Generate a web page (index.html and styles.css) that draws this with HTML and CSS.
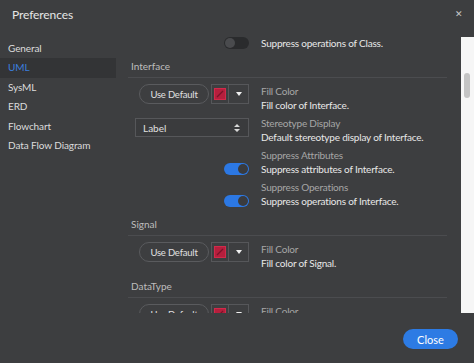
FILE: index.html
```html
<!DOCTYPE html>
<html lang="en">
  <head>
    <meta charset="UTF-8" />
    <title>Preferences</title>
    <link rel="stylesheet" href="styles.css">
  </head>
  <body>
    <div class="dialog">
      <div class="dialog-header">
        <span class="dialog-title">Preferences</span>
        <span class="dialog-close">&#x2715;</span>
      </div>

      <div class="dialog-body">
        <ul class="sidebar">
          <li>General</li>
          <li class="active">UML</li>
          <li>SysML</li>
          <li>ERD</li>
          <li>Flowchart</li>
          <li>Data Flow Diagram</li>
        </ul>

        <div class="content">
          <div class="content-inner">
            <div class="row">
              <div class="control"><span class="toggle"></span></div>
              <div class="info">
                <div class="label">Suppress Operations</div>
                <div class="desc">Suppress operations of Class.</div>
              </div>
            </div>

            <div class="group-title">Interface</div>
            <div class="row">
              <div class="control">
                <button class="btn-default">Use Default</button>
                <span class="swatch"><svg width="12" height="12" viewBox="0 0 12 12"><rect x="0.5" y="0.5" width="11" height="11" fill="#b51f3d" stroke="#d12a4a"/><path d="M3 9 L9 3" stroke="#7a1228" stroke-width="1.2"/></svg></span>
                <span class="drop"></span>
              </div>
              <div class="info">
                <div class="label">Fill Color</div>
                <div class="desc">Fill color of Interface.</div>
              </div>
            </div>
            <div class="row">
              <div class="control">
                <div class="select">
                  <span>Label</span>
                  <svg width="8" height="10" viewBox="0 0 8 10"><path d="M1 4 L4 1 L7 4 Z M1 6 L4 9 L7 6 Z" fill="#d8d8d8"/></svg>
                </div>
              </div>
              <div class="info">
                <div class="label">Stereotype Display</div>
                <div class="desc">Default stereotype display of Interface.</div>
              </div>
            </div>
            <div class="row">
              <div class="control"><span class="toggle on"></span></div>
              <div class="info">
                <div class="label">Suppress Attributes</div>
                <div class="desc">Suppress attributes of Interface.</div>
              </div>
            </div>
            <div class="row">
              <div class="control"><span class="toggle on"></span></div>
              <div class="info">
                <div class="label">Suppress Operations</div>
                <div class="desc">Suppress operations of Interface.</div>
              </div>
            </div>

            <div class="group-title">Signal</div>
            <div class="row">
              <div class="control">
                <button class="btn-default">Use Default</button>
                <span class="swatch"><svg width="12" height="12" viewBox="0 0 12 12"><rect x="0.5" y="0.5" width="11" height="11" fill="#b51f3d" stroke="#d12a4a"/><path d="M3 9 L9 3" stroke="#7a1228" stroke-width="1.2"/></svg></span>
                <span class="drop"></span>
              </div>
              <div class="info">
                <div class="label">Fill Color</div>
                <div class="desc">Fill color of Signal.</div>
              </div>
            </div>

            <div class="group-title">DataType</div>
            <div class="row">
              <div class="control">
                <button class="btn-default">Use Default</button>
                <span class="swatch"><svg width="12" height="12" viewBox="0 0 12 12"><rect x="0.5" y="0.5" width="11" height="11" fill="#b51f3d" stroke="#d12a4a"/><path d="M3 9 L9 3" stroke="#7a1228" stroke-width="1.2"/></svg></span>
                <span class="drop"></span>
              </div>
              <div class="info">
                <div class="label">Fill Color</div>
                <div class="desc">Fill color of DataType.</div>
              </div>
            </div>
          </div>
        </div>

        <div class="scrollbar"><div class="thumb"></div></div>
      </div>

      <div class="dialog-footer">
        <button class="btn-close">Close</button>
      </div>
    </div>
  </body>
</html>
```

FILE: styles.css
```css
body {
  margin: 0;
  font-family: Lato, "Noto Sans", sans-serif;
  background-color: #3d3e40;
}
.dialog {
  width: 474px;
  height: 363px;
  background: #3d3e40;
  color: #e2e2e2;
  display: flex;
  flex-direction: column;
  overflow: hidden;
}
.dialog-header {
  height: 37px;
  display: flex;
  justify-content: space-between;
  padding: 0 12px;
  box-sizing: border-box;
}
.dialog-title {
  font-size: 12px;
  letter-spacing: -0.1px;
  line-height: 30px;
  color: #e6e6e6;
}
.dialog-close {
  font-size: 9px;
  line-height: 27px;
  color: #c8c8c8;
  margin-right: -1px;
}
.dialog-body {
  height: 276px;
  display: flex;
}
.sidebar {
  list-style: none;
  margin: 0;
  padding: 2px 0 0 0;
  width: 117px;
  flex-shrink: 0;
}
.sidebar li {
  height: 19.4px;
  line-height: 19.4px;
  padding-left: 8px;
  font-size: 10px;
  letter-spacing: -0.1px;
  color: #dcdcdc;
}
.sidebar li.active {
  background: #333436;
  color: #3b7fde;
  margin-right: 1px;
}
.content {
  flex: 1;
  overflow: hidden;
}
.content-inner {
  margin-top: -15px;
  padding: 0 14px 0 11px;
}
.group-title {
  height: 23px;
  line-height: 24px;
  padding-left: 3px;
  font-size: 10px;
  color: #bdbdbd;
  border-bottom: 1px solid #4b4c4f;
}
.row {
  height: 32px;
  margin-top: 6px;
  display: flex;
  gap: 12px;
  padding-left: 7px;
}
.content-inner > .row:first-child {
  margin-top: 0;
}
.row + .row {
  margin-top: 0;
}
.control {
  width: 114px;
  flex-shrink: 0;
  display: flex;
  justify-content: flex-end;
  align-items: flex-start;
}
.info {
  padding-top: 1px;
  font-size: 10px;
  letter-spacing: -0.2px;
  line-height: 13.5px;
}
.label {
  color: #a6a6a6;
}
.desc {
  color: #e8e8e8;
}
.btn-default {
  height: 20px;
  width: 70px;
  margin-right: 2px;
  padding: 0;
  font-family: inherit;
  font-size: 9.5px;
  letter-spacing: -0.2px;
  color: #e0e0e0;
  background: #3d3e40;
  border: 1px solid #5a5b5e;
  border-radius: 10px;
}
.swatch {
  width: 18px;
  height: 20px;
  box-sizing: border-box;
  border: 1px solid #56575a;
  display: flex;
  align-items: center;
  justify-content: center;
}
.drop {
  width: 20px;
  height: 20px;
  box-sizing: border-box;
  border: 1px solid #56575a;
  border-left: none;
  display: flex;
  align-items: center;
  justify-content: center;
}
.drop::after {
  content: "";
  border-left: 3px solid transparent;
  border-right: 3px solid transparent;
  border-top: 4px solid #f0f0f0;
}
.select {
  margin-top: 2px;
  width: 114px;
  height: 19px;
  box-sizing: border-box;
  border: 1px solid #56575a;
  background: #3a3b3d;
  display: flex;
  align-items: center;
  justify-content: space-between;
  padding: 0 7px 0 7px;
  font-size: 10px;
  color: #e0e0e0;
}
.toggle {
  margin-top: 15px;
  width: 25px;
  height: 12px;
  border-radius: 6px;
  background: #2a2b2d;
  position: relative;
}
.toggle::after {
  content: "";
  position: absolute;
  top: 1px;
  left: 1px;
  width: 10px;
  height: 10px;
  border-radius: 50%;
  background: #4a4b4e;
}
.toggle.on {
  background: #2c78e4;
}
.toggle.on::after {
  left: 14px;
  background: #3a3b3e;
}
.scrollbar {
  width: 13px;
  flex-shrink: 0;
  background: #f6f6f6;
  padding: 36px 0 0 3px;
  box-sizing: border-box;
}
.thumb {
  width: 6px;
  height: 25px;
  border-radius: 3px;
  background: #c4c4c4;
}
.dialog-footer {
  flex: 1;
  display: flex;
  justify-content: flex-end;
  align-items: flex-start;
  padding: 16px 16px 0 0;
}
.btn-close {
  width: 55px;
  height: 20px;
  border: none;
  border-radius: 10px;
  background: #2d7be4;
  color: #ffffff;
  font-family: inherit;
  font-size: 11px;
  padding: 0;
}
```
